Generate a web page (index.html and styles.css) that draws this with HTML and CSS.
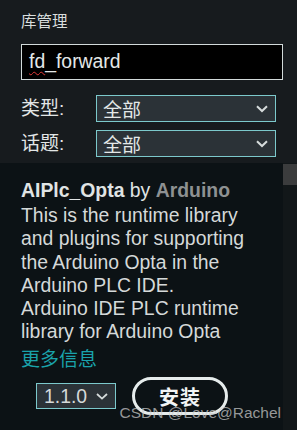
FILE: index.html
```html
<!DOCTYPE html>
<html lang="zh">
<head>
<meta charset="utf-8">
<link rel="stylesheet" href="styles.css">
</head>
<body>
<div class="panel">
  <header class="head">
    <div class="head-title">库管理</div>
    <div class="search"><span class="typo">fd</span>_forward</div>
    <div class="filter">
      <span class="filter-label">类型:</span>
      <div class="dropdown">
        <span>全部</span>
        <svg class="chev" width="12" height="8" viewBox="0 0 12 8"><path d="M1 1.2 L6 6 L11 1.2" fill="none" stroke="#d6dcdc" stroke-width="2"/></svg>
      </div>
    </div>
    <div class="filter">
      <span class="filter-label">话题:</span>
      <div class="dropdown">
        <span>全部</span>
        <svg class="chev" width="12" height="8" viewBox="0 0 12 8"><path d="M1 1.2 L6 6 L11 1.2" fill="none" stroke="#d6dcdc" stroke-width="2"/></svg>
      </div>
    </div>
  </header>
  <section class="list">
    <div class="list-body">
      <div class="lib-title"><b>AIPlc_Opta</b> by <b class="author">Arduino</b></div>
      <p class="lib-desc">This is the runtime library and plugins for supporting the Arduino Opta in the Arduino PLC IDE.<br>Arduino IDE PLC runtime library for Arduino Opta</p>
      <a class="more">更多信息</a>
      <div class="actions">
        <div class="version">
          <span>1.1.0</span>
          <svg class="chev" width="12" height="7" viewBox="0 0 12 7"><path d="M1 1 L6 5.6 L11 1" fill="none" stroke="#d6dcdc" stroke-width="1.8"/></svg>
        </div>
        <div class="install">安装</div>
      </div>
    </div>
    <div class="scrollbar"><div class="thumb"></div></div>
  </section>
  <div class="watermark">CSDN @Love@Rachel</div>
</div>
</body>
</html>
```
FILE: styles.css
```css
* { box-sizing: border-box; }
html, body { margin: 0; padding: 0; }
body {
  width: 297px;
  height: 430px;
  overflow: hidden;
  background: #171b1e;
  font-family: "Liberation Sans", "Noto Sans CJK SC", sans-serif;
  color: #dde2e2;
}
.panel {
  position: relative;
  width: 297px;
  height: 430px;
  display: flex;
  flex-direction: column;
}
.head {
  padding: 12px 14px 6px 21px;
  display: flex;
  flex-direction: column;
}
.head-title {
  font-size: 15.5px;
  line-height: 20px;
  color: #d9dede;
}
.search {
  margin-top: 12px;
  height: 36px;
  width: 262px;
  background: #000;
  border: 1px solid #d2dada;
  padding: 0 7px;
  font-size: 19.4px;
  line-height: 33px;
  color: #e4e8e8;
}
.typo {
  text-decoration: underline wavy #e23a3a;
  text-decoration-thickness: 1px;
  text-underline-offset: 3px;
}
.filter {
  display: flex;
  align-items: center;
  margin-top: 8px;
}
.search + .filter { margin-top: 15px; }
.filter-label {
  width: 75px;
  font-size: 19px;
  line-height: 27px;
  color: #e2e6e6;
}
.dropdown {
  width: 180px;
  height: 27px;
  background: #2b3237;
  border: 1px solid #7cc9cc;
  display: flex;
  align-items: center;
  justify-content: space-between;
  padding: 0 7px 0 6px;
  font-size: 19px;
  color: #e4e8e8;
}
.list {
  flex: 1;
  display: flex;
  background: #0c1215;
  min-height: 0;
}
.list-body {
  flex: 1;
  padding: 15px 34px 0 21px;
}
.scrollbar {
  width: 14px;
  background: #121719;
}
.thumb {
  height: 21px;
  margin-top: 1px;
  background: #3b3c3d;
}
.lib-title {
  font-size: 19.4px;
  line-height: 24px;
  color: #e0e4e4;
  margin-bottom: 2px;
  white-space: nowrap;
}
.author { color: #8e9192; }
.lib-desc {
  margin: 0;
  font-size: 19.4px;
  line-height: 23.3px;
  color: #d5d9d9;
}
.more {
  display: block;
  margin-top: 4px;
  font-size: 19px;
  line-height: 23.3px;
  color: #1aa3ab;
}
.actions {
  display: flex;
  align-items: center;
  margin-top: 6px;
  padding-left: 15px;
  gap: 16px;
}
.version {
  width: 80px;
  height: 26px;
  flex: none;
  background: #2b3237;
  border: 1px solid #7cc9cc;
  display: flex;
  align-items: center;
  justify-content: space-between;
  padding: 0 7px 0 7px;
  font-size: 19.4px;
  color: #d5d9d9;
}
.install {
  width: 96px;
  height: 38px;
  flex: none;
  border: 3px solid #e6ecec;
  border-radius: 19px;
  display: flex;
  align-items: center;
  justify-content: center;
  font-size: 20px;
  font-weight: bold;
  color: #f2f5f5;
  letter-spacing: 1px;
}
.watermark {
  position: absolute;
  right: 16px;
  bottom: 9px;
  font-size: 15.5px;
  line-height: 16px;
  color: rgba(205, 205, 205, 0.72);
}
```
